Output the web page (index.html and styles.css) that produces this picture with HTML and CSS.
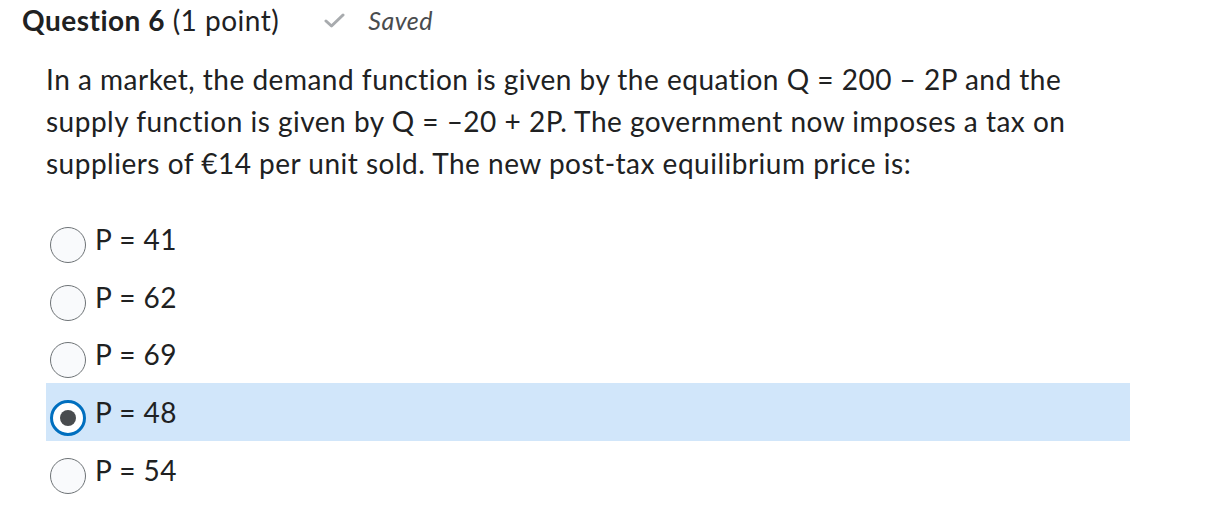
FILE: index.html
```html
<!DOCTYPE html>
<html>
<head>
<meta charset="utf-8">
<link rel="stylesheet" href="styles.css">
</head>
<body>
<div class="question">
  <div class="header">
    <h2 class="title"><span class="qnum">Question 6</span> <span class="points">(1 point)</span></h2>
    <div class="saved">
      <svg class="check" width="21" height="15" viewBox="0 0 21 15"><path d="M2 8 L7.5 13 L19 2" fill="none" stroke="#a8abae" stroke-width="3" stroke-linecap="round" stroke-linejoin="round"/></svg>
      <span class="saved-text">Saved</span>
    </div>
  </div>
  <p class="prompt">In a market, the demand function is given by the equation Q = 200 – 2P and the supply function is given by Q = –20 + 2P. The government now imposes a tax on suppliers of €14 per unit sold. The new post-tax equilibrium price is:</p>
  <div class="options">
    <label class="option"><span class="radio"></span><span class="label">P = 41</span></label>
    <label class="option"><span class="radio"></span><span class="label">P = 62</span></label>
    <label class="option"><span class="radio"></span><span class="label">P = 69</span></label>
    <label class="option selected"><span class="radio checked"></span><span class="label">P = 48</span></label>
    <label class="option"><span class="radio"></span><span class="label">P = 54</span></label>
  </div>
</div>
</body>
</html>
```

FILE: styles.css
```css
html, body {
  margin: 0;
  padding: 0;
  background: #ffffff;
}
body {
  font-family: Lato, "Noto Sans", sans-serif;
  color: #202122;
  letter-spacing: 0.5px;
}
.question {
  padding: 0 0 0 22px;
  width: 1108px;
}
.header {
  display: flex;
  align-items: center;
  gap: 45px;
  height: 40px;
}
.title {
  margin: 0;
  font-size: 28px;
  font-weight: 400;
  color: #202122;
}
.qnum {
  font-weight: 700;
}
.saved {
  display: flex;
  align-items: center;
  gap: 23px;
  color: #494c4e;
}
.check {
  display: block;
  margin-top: 1px;
}
.saved-text {
  font-style: italic;
  font-size: 25px;
}
.prompt {
  margin: 18px 0 0 24px;
  font-size: 28px;
  line-height: 42px;
  width: 1040px;
}
.options {
  margin-top: 26px;
  display: flex;
  flex-direction: column;
}
.option {
  display: flex;
  align-items: center;
  gap: 9px;
  height: 57.7px;
  margin-left: 24px;
  padding-left: 4px;
  font-size: 28px;
}
.option.selected {
  background: #d1e6fa;
}
.radio {
  box-sizing: border-box;
  width: 36px;
  height: 36px;
  border-radius: 50%;
  border: 1.5px solid #6e7376;
  background: #f9fafc;
  margin-top: 12px;
  flex: none;
  display: flex;
  align-items: center;
  justify-content: center;
}
.radio.checked {
  border: 3.5px solid #006fbf;
  background: #ffffff;
}
.radio.checked::after {
  content: "";
  width: 16px;
  height: 16px;
  border-radius: 50%;
  background: #494c4e;
}
.label {
  line-height: 1;
}
```
